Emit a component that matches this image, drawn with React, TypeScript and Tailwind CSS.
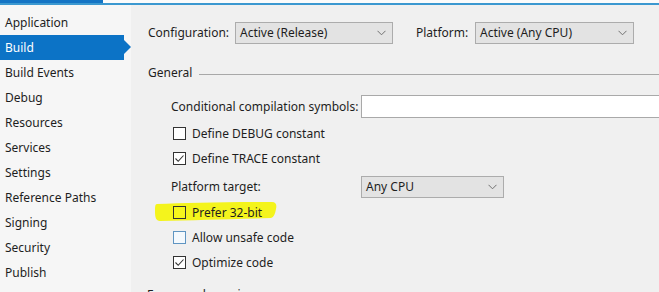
import React from 'react';

const font = { fontFamily: '"Noto Sans", "Open Sans", sans-serif' };

const navItems = [
  'Application',
  'Build',
  'Build Events',
  'Debug',
  'Resources',
  'Services',
  'Settings',
  'Reference Paths',
  'Signing',
  'Security',
  'Publish',
];

const Chevron = () => (
  <svg width="9" height="6" viewBox="0 0 9 6" className="shrink-0">
    <path d="M0.5 0.8 L4.5 4.8 L8.5 0.8" fill="none" stroke="#707070" strokeWidth="1" />
  </svg>
);

const Dropdown = ({ value, width }: { value: string; width: string }) => (
  <div className={`h-[22px] ${width} flex items-center justify-between pl-[4px] pr-[6px] bg-[#e3e3e3] border border-[#acacac]`}>
    <span>{value}</span>
    <Chevron />
  </div>
);

const Checkbox = ({
  label,
  checked,
  variant = 'normal',
}: {
  label: string;
  checked?: boolean;
  variant?: 'normal' | 'hover' | 'marked';
}) => (
  <div className="h-[25px] flex items-center gap-[6px] pl-[2px]">
    <div
      className={`w-[13px] h-[13px] border flex items-center justify-center ${
        variant === 'hover'
          ? 'border-[#5f95c2] bg-[#f4f9fd]'
          : variant === 'marked'
          ? 'border-[#333333] bg-[#f6f61c]'
          : 'border-[#333333] bg-white'
      }`}
    >
      {checked && (
        <svg width="11" height="11" viewBox="0 0 11 11">
          <path d="M1.5 5.5 L4.2 8.3 L9.5 2.5" fill="none" stroke="#333333" strokeWidth="1.1" />
        </svg>
      )}
    </div>
    <span>{label}</span>
  </div>
);

export default function App() {
  return (
    <div className="w-[659px] h-[292px] overflow-hidden bg-[#f0f0f0] text-[12px] text-[#1e1e1e] flex flex-col" style={font}>
      {/* tab strip remnant */}
      <div className="h-[3px] flex shrink-0">
        <div className="w-[103px] bg-[#1474c4]" />
        <div className="flex-1 bg-[#fbfbfb]" />
      </div>
      <div className="h-[2px] bg-[#3b98d0] shrink-0" />

      <div className="flex flex-1 min-h-0">
        {/* sidebar */}
        <div className="w-[131px] shrink-0 bg-[#f6f6f6] pt-[5px] flex flex-col">
          {navItems.map((item) => (
            <div key={item} className="relative h-[25px] flex items-center">
              {item === 'Build' ? (
                <>
                  <div className="h-full w-[124px] bg-[#0c73c6] text-white flex items-center pl-[5px]">{item}</div>
                  <div className="absolute left-[124px] top-[5px] w-0 h-0 border-y-[7.5px] border-y-transparent border-l-[7px] border-l-[#0c73c6]" />
                </>
              ) : (
                <span className="pl-[5px]">{item}</span>
              )}
            </div>
          ))}
        </div>

        {/* content */}
        <div className="flex-1 pl-[17px] flex flex-col">
          <div className="mt-[17px] h-[22px] flex items-center">
            <span className="w-[87px]">Configuration:</span>
            <Dropdown value="Active (Release)" width="w-[158px]" />
            <span className="ml-[23px] w-[59px]">Platform:</span>
            <Dropdown value="Active (Any CPU)" width="w-[159px]" />
          </div>

          <div className="mt-[15px] h-px bg-[#a8a8a8]" />

          <div className="mt-[6px] h-[16px] flex items-center gap-[7px]">
            <span>General</span>
            <div className="flex-1 h-px bg-[#a8a8a8] mt-[2px]" />
          </div>

          <div className="pl-[23px] flex flex-col">
            <div className="mt-[14px] h-[23px] flex items-center">
              <span className="w-[190px]">Conditional compilation symbols:</span>
              <div className="flex-1 h-full bg-white border border-[#a9a9a9] border-r-0" />
            </div>
            <div className="mt-[3px]">
              <Checkbox label="Define DEBUG constant" />
            </div>
            <Checkbox label="Define TRACE constant" checked />
            <div className="mt-[5px] h-[22px] flex items-center">
              <span className="w-[190px]">Platform target:</span>
              <Dropdown value="Any CPU" width="w-[143px]" />
            </div>
            <div className="relative mt-[2px]">
              <svg className="absolute left-[-17px] top-[0px]" width="125" height="24" viewBox="0 0 125 24">
                <path
                  d="M3 4 C30 3 70 2 118 2 C122 2 123 5 122 9 C121 14 120 17 117 18 C80 19 40 20 6 21 C2 21 1 17 1 12 C1 7 1 4 3 4 Z"
                  fill="#f4f41c"
                />
              </svg>
              <div className="relative">
                <Checkbox label="Prefer 32-bit" variant="marked" />
              </div>
            </div>
            <Checkbox label="Allow unsafe code" variant="hover" />
            <Checkbox label="Optimize code" checked />
          </div>

          <div className="mt-[11px] -ml-px">Errors and warnings</div>
        </div>
      </div>
    </div>
  );
}
